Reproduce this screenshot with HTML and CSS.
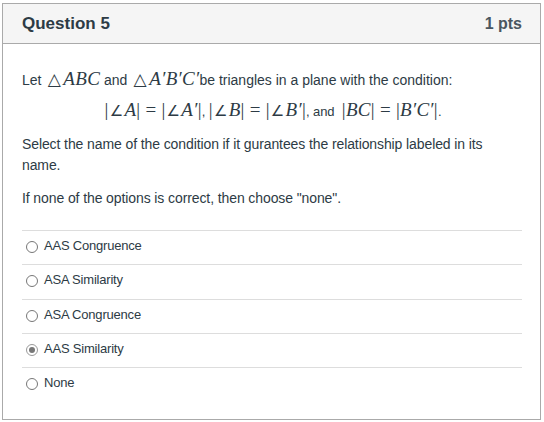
FILE: index.html
```html
<!DOCTYPE html>
<html>
<head>
<meta charset="utf-8">
<link rel="stylesheet" href="styles.css">
</head>
<body>
<div class="card">
  <div class="header">
    <span class="title">Question 5</span>
    <span class="pts">1 pts</span>
  </div>
  <div class="body">
    <p class="intro">Let <span class="m"><span class="tri">△</span><i>ABC</i></span> and <span class="m"><span class="tri">△</span><i>A′B′C′</i></span>be triangles in a plane with the condition:</p>
    <div class="mathline"><span class="m">|<span class="ang">∠</span><i>A</i>|<span class="op">=</span>|<span class="ang">∠</span><i>A′</i>|</span><span class="small">, </span><span class="m">|<span class="ang">∠</span><i>B</i>|<span class="op">=</span>|<span class="ang">∠</span><i>B′</i>|</span><span class="small">, and </span>&nbsp;<span class="m">|<i>BC</i>|<span class="op">=</span>|<i>B′C′</i>|</span><span class="small">.</span></div>
    <p>Select the name of the condition if it gurantees the relationship labeled in its name.</p>
    <p>If none of the options is correct, then choose "none".</p>
    <ul class="options">
      <li><span class="radio"></span>AAS Congruence</li>
      <li><span class="radio"></span>ASA Similarity</li>
      <li><span class="radio"></span>ASA Congruence</li>
      <li><span class="radio checked"></span>AAS Similarity</li>
      <li><span class="radio"></span>None</li>
    </ul>
  </div>
</div>
</body>
</html>
```
FILE: styles.css
```css
html, body {
  margin: 0;
  padding: 0;
  background: #fff;
}
body {
  padding: 3px 3px 3px 2px;
  font-family: "Liberation Sans", Arial, sans-serif;
  color: #2d3b45;
}
.card {
  width: 537px;
  border: 1px solid #aaa;
  box-sizing: content-box;
}
.header {
  height: 39px;
  background: #f5f5f5;
  border-bottom: 1px solid #aaa;
  display: flex;
  align-items: center;
  justify-content: space-between;
  padding: 0 18px 0 19px;
}
.title {
  font-weight: bold;
  font-size: 17px;
  color: #2d3b45;
}
.pts {
  font-weight: bold;
  font-size: 16px;
  color: #4a5660;
}
.body {
  padding: 24px 18px 18px 19px;
  font-size: 14px;
  line-height: 21px;
  letter-spacing: -0.1px;
}
p {
  margin: 0 0 12px 0;
}
.intro {
  margin-bottom: 6px;
  letter-spacing: 0;
}
.m {
  font-family: "Liberation Serif", "Times New Roman", serif;
  font-size: 19px;
  letter-spacing: 0.3px;
}
.m i {
  font-style: italic;
}
.tri {
  display: inline-block;
  width: 18px;
  text-align: center;
  font-family: "DejaVu Sans", sans-serif;
  font-size: 17px;
  font-style: normal;
}
.ang {
  font-family: "DejaVu Sans", sans-serif;
  font-size: 15px;
  margin: 0 1px;
}
.op {
  margin: 0 5px;
}
.mathline {
  text-align: center;
  line-height: 26px;
  margin-bottom: 9px;
  padding-left: 2px;
}
.small {
  font-size: 13px;
}
.options {
  list-style: none;
  margin: 21px 0 0 0;
  padding: 0;
  width: 500px;
}
.options li {
  border-top: 1px solid #ddd;
  height: 34.25px;
  box-sizing: border-box;
  display: flex;
  align-items: flex-start;
  padding: 5px 0 0 4px;
  line-height: 20px;
  font-size: 13px;
  letter-spacing: -0.2px;
}
.radio {
  width: 12px;
  height: 12px;
  border: 1px solid #777;
  border-radius: 50%;
  margin-right: 6px;
  box-sizing: border-box;
  position: relative;
  flex: none;
  margin-top: 5px;
}
.radio.checked {
  border-color: #999;
}
.radio.checked::after {
  content: "";
  position: absolute;
  left: 2px;
  top: 2px;
  width: 6px;
  height: 6px;
  border-radius: 50%;
  background: #777;
}
```
